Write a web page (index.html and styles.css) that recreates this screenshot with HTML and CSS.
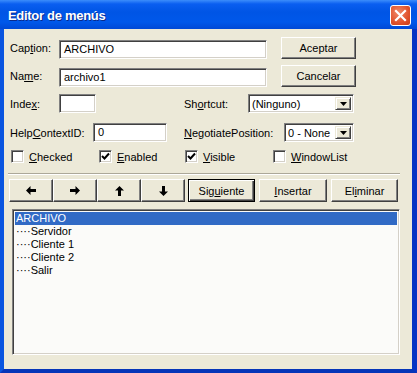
FILE: index.html
```html
<!DOCTYPE html>
<html lang="es">
<head>
    <meta charset="UTF-8">
    <title>Editor de menús</title>
    <link rel="stylesheet" href="styles.css">
</head>
<body>
    <div class="window">
        <div class="titlebar">
            <span class="title">Editor de menús</span>
            <span class="close">
                <svg width="13" height="13" viewBox="0 0 13 13"><path d="M2 2 L11 11 M11 2 L2 11" stroke="#fff" stroke-width="2.2" stroke-linecap="square"/></svg>
            </span>
        </div>
        <div class="client">
            <div class="row row-caption">
                <label class="lbl lbl-short">Cap<u>t</u>ion:</label>
                <div class="field wide">ARCHIVO</div>
                <button class="btn side">Aceptar</button>
            </div>
            <div class="row row-name">
                <label class="lbl lbl-short">Na<u>m</u>e:</label>
                <div class="field wide">archivo1</div>
                <button class="btn side">Cancelar</button>
            </div>
            <div class="row row-index">
                <label class="lbl lbl-short">Inde<u>x</u>:</label>
                <div class="field index"></div>
                <label class="lbl lbl-shortcut">Sh<u>o</u>rtcut:</label>
                <div class="combo shortcut">
                    <span class="combo-text">(Ninguno)</span>
                    <span class="combo-btn"><svg width="7" height="4" viewBox="0 0 7 4"><path d="M0 0 H7 L3.5 4 Z" fill="#000"/></svg></span>
                </div>
            </div>
            <div class="row row-help">
                <label class="lbl lbl-help">Help<u>C</u>ontextID:</label>
                <div class="field help">0</div>
                <label class="lbl lbl-negotiate"><u>N</u>egotiatePosition:</label>
                <div class="combo negotiate">
                    <span class="combo-text">0 - None</span>
                    <span class="combo-btn"><svg width="7" height="4" viewBox="0 0 7 4"><path d="M0 0 H7 L3.5 4 Z" fill="#000"/></svg></span>
                </div>
            </div>
            <div class="checks">
                <div class="check"><span class="box"></span><span><u>C</u>hecked</span></div>
                <div class="check"><span class="box"><svg width="9" height="9" viewBox="0 0 9 9"><path d="M1 4 L3.5 6.5 L8 1.5" stroke="#000" stroke-width="2" fill="none"/></svg></span><span><u>E</u>nabled</span></div>
                <div class="check"><span class="box"><svg width="9" height="9" viewBox="0 0 9 9"><path d="M1 4 L3.5 6.5 L8 1.5" stroke="#000" stroke-width="2" fill="none"/></svg></span><span><u>V</u>isible</span></div>
                <div class="check"><span class="box"></span><span><u>W</u>indowList</span></div>
            </div>
            <div class="separator"></div>
            <div class="toolbar">
                <div class="arrows">
                    <button class="btn arrow"><svg width="10" height="9" viewBox="0 0 10 9"><path d="M0 4.5 L4.5 0 V3 H10 V6 H4.5 V9 Z" fill="#000"/></svg></button>
                    <button class="btn arrow"><svg width="10" height="9" viewBox="0 0 10 9"><path d="M10 4.5 L5.5 0 V3 H0 V6 H5.5 V9 Z" fill="#000"/></svg></button>
                    <button class="btn arrow"><svg width="9" height="10" viewBox="0 0 9 10"><path d="M4.5 0 L9 4.5 H6 V10 H3 V4.5 H0 Z" fill="#000"/></svg></button>
                    <button class="btn arrow"><svg width="9" height="10" viewBox="0 0 9 10"><path d="M4.5 10 L9 5.5 H6 V0 H3 V5.5 H0 Z" fill="#000"/></svg></button>
                </div>
                <button class="btn action default">Sig<u>u</u>iente</button>
                <button class="btn action insert"><u>I</u>nsertar</button>
                <button class="btn action">El<u>i</u>minar</button>
            </div>
            <div class="listbox">
                <div class="item selected">ARCHIVO</div>
                <div class="item">····Servidor</div>
                <div class="item">····Cliente 1</div>
                <div class="item">····Cliente 2</div>
                <div class="item">····Salir</div>
            </div>
        </div>
    </div>
</body>
</html>
```

FILE: styles.css
```css
body {
    margin: 0;
    padding: 0;
    background: #0a3fc8;
    font-family: "Liberation Sans", Arial, sans-serif;
    font-size: 11px;
    color: #000;
}
.window {
    width: 417px;
    height: 373px;
    box-sizing: border-box;
    display: flex;
    flex-direction: column;
    background: #0055e5;
    border-left: 4px solid #0a55e0;
    border-right: 5px solid #0634c4;
    border-bottom: 4px solid #0635b8;
}
.titlebar {
    height: 29px;
    margin-left: -4px;
    margin-right: -5px;
    display: flex;
    align-items: center;
    justify-content: space-between;
    padding: 0 6px 0 8px;
    background: linear-gradient(#3c8dfb 0, #0a5ef0 4px, #0055e5 12px, #0058ea 22px, #0049d6 29px);
    flex-shrink: 0;
}
.title {
    color: #fff;
    font-weight: bold;
    font-size: 13px;
    letter-spacing: -0.3px;
    text-shadow: 1px 1px #0a2a8a;
    margin-top: 1px;
}
.close {
    width: 19px;
    height: 19px;
    border: 1px solid #fff;
    border-radius: 3px;
    background: radial-gradient(circle at 40% 35%, #f08a6a, #e0522c 60%, #c83c16);
    display: flex;
    align-items: center;
    justify-content: center;
    margin-top: 1px;
}
.client {
    flex: 1;
    background: #ece9d8;
    padding: 8px 0 0 6px;
    display: flex;
    flex-direction: column;
}
.row {
    display: flex;
    align-items: center;
}
.row-caption {
    height: 22px;
}
.row-name {
    height: 22px;
    margin-top: 6px;
}
.row-index {
    height: 19px;
    margin-top: 7px;
}
.row-help {
    height: 19px;
    margin-top: 10px;
}
.lbl {
    flex-shrink: 0;
}
.lbl-short {
    width: 49px;
}
.lbl-shortcut {
    width: 64px;
    margin-left: 88px;
}
.lbl-help {
    width: 83px;
}
.lbl-negotiate {
    width: 100px;
    margin-left: 17px;
}
.field {
    box-sizing: border-box;
    height: 19px;
    background: #fff;
    border: 1px solid;
    border-color: #808080 #fff #fff #808080;
    box-shadow: inset 1px 1px #404040, inset -1px -1px #d4d0c8;
    padding: 2px 4px;
    line-height: 13px;
    white-space: nowrap;
}
.field.wide {
    width: 208px;
    margin-top: 2px;
}
.field.index {
    width: 37px;
}
.field.help {
    width: 74px;
}
.combo {
    box-sizing: border-box;
    height: 19px;
    display: flex;
    align-items: stretch;
    background: #fff;
    border: 1px solid;
    border-color: #808080 #fff #fff #808080;
    box-shadow: inset 1px 1px #404040, inset -1px -1px #d4d0c8;
    padding: 2px;
}
.combo.shortcut {
    width: 106px;
}
.combo.negotiate {
    width: 70px;
}
.combo-text {
    flex: 1;
    padding-left: 1px;
    line-height: 14px;
    white-space: nowrap;
}
.combo-btn {
    width: 16px;
    box-sizing: border-box;
    background: #ece9d8;
    border: 1px solid;
    border-color: #ece9d8 #404040 #404040 #ece9d8;
    box-shadow: inset 1px 1px #fff, inset -1px -1px #808080;
    display: flex;
    align-items: center;
    justify-content: center;
}
.btn {
    font-family: inherit;
    font-size: 11px;
    color: #000;
    background: #ece9d8;
    border: 1px solid;
    border-color: #fff #404040 #404040 #fff;
    box-shadow: inset -1px -1px #808080;
    padding: 0;
    box-sizing: border-box;
    display: flex;
    align-items: center;
    justify-content: center;
}
.btn.side {
    width: 75px;
    height: 22px;
    margin-left: 14px;
}
.checks {
    display: grid;
    grid-template-columns: 88px 86px 88px auto;
    margin-top: 8px;
    padding-left: 1px;
    height: 13px;
}
.check {
    display: flex;
    align-items: center;
    gap: 5px;
}
.box {
    width: 13px;
    height: 13px;
    box-sizing: border-box;
    background: #fff;
    border: 1px solid;
    border-color: #808080 #fff #fff #808080;
    box-shadow: inset 1px 1px #404040, inset -1px -1px #d4d0c8;
    display: flex;
    align-items: center;
    justify-content: center;
}
.separator {
    margin: 10px 0 0 -2px;
    width: 392px;
    border-top: 1px solid #aca899;
    border-bottom: 1px solid #fff;
}
.toolbar {
    display: flex;
    margin-top: 4px;
    margin-left: -1px;
    height: 23px;
}
.arrows {
    display: flex;
}
.btn.arrow {
    width: 44px;
    height: 23px;
}
.btn.action {
    height: 23px;
    width: 67px;
    margin-left: 4px;
}
.btn.insert {
    width: 68px;
}
.btn.default {
    margin-left: 3px;
    border: 1px solid #000;
    box-shadow: inset 1px 1px #fff, inset -1px -1px #404040, inset -2px -2px #808080;
}
.listbox {
    margin: 7px 0 0 2px;
    width: 388px;
    height: 146px;
    box-sizing: border-box;
    background: #fbfbf9;
    border: 1px solid;
    border-color: #808080 #fff #fff #808080;
    box-shadow: inset 1px 1px #404040, inset -1px -1px #d4d0c8;
    padding: 2px;
}
.item {
    height: 13px;
    line-height: 13px;
    padding-left: 1px;
    white-space: nowrap;
}
.item.selected {
    background: #316ac5;
    color: #fff;
}
```
